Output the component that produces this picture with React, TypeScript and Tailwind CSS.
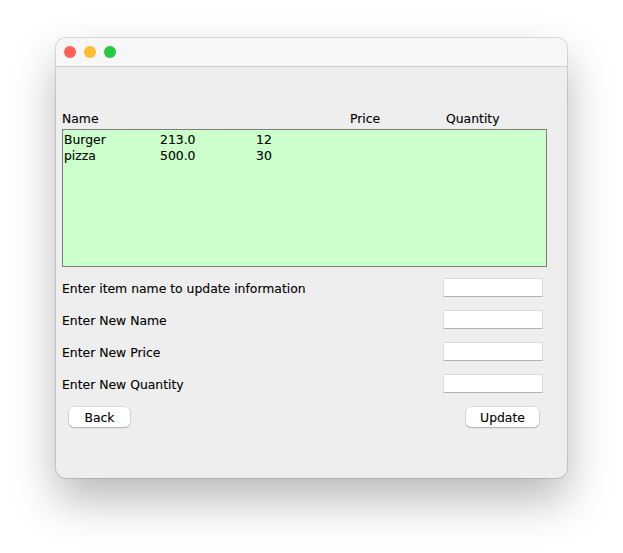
import React from "react"

const items = [
  { name: "Burger", price: "213.0", qty: "12" },
  { name: "pizza", price: "500.0", qty: "30" },
]

const fields = [
  "Enter item name to update information",
  "Enter New Name",
  "Enter New Price",
  "Enter New Quantity",
]

export default function App() {
  return (
    <div
      className="w-[623px] h-[553px] bg-white pl-[56px] pt-[38px] text-[12.4px] text-black [-webkit-text-stroke:0.12px_#000]"
      style={{ fontFamily: '"DejaVu Sans", "Liberation Sans", sans-serif' }}
    >
      <div className="w-[511px] h-[440px] rounded-[10px] bg-[#eeeeee] overflow-hidden flex flex-col shadow-[0_22px_45px_rgba(0,0,0,0.28),0_0_0_1px_rgba(0,0,0,0.12)]">
        {/* title bar */}
        <div className="h-[29px] shrink-0 bg-[#f7f7f7] border-b border-[#cfcfcf] flex items-center gap-[8px] pl-[8px]">
          <span className="w-[12px] h-[12px] rounded-full bg-[#ff5f57]" />
          <span className="w-[12px] h-[12px] rounded-full bg-[#febc2e]" />
          <span className="w-[12px] h-[12px] rounded-full bg-[#28c840]" />
        </div>

        <div className="px-[6px] pt-[43px]">
          {/* header */}
          <div className="grid grid-cols-[96px_96px_96px_96px_96px] leading-[16px] h-[19px] pt-[1px]">
            <span>Name</span>
            <span />
            <span />
            <span>Price</span>
            <span>Quantity</span>
          </div>

          {/* table */}
          <div className="w-[485px] h-[138px] border border-[#7d7d7d] bg-[#ccffcc] pl-[1px] pt-[2px]">
            {items.map(it => (
              <div key={it.name} className="grid grid-cols-[96px_96px_96px] leading-[16px]">
                <span>{it.name}</span>
                <span>{it.price}</span>
                <span>{it.qty}</span>
              </div>
            ))}
          </div>

          {/* form */}
          <div className="flex flex-col gap-[13px] pt-[11px] w-[481px]">
            {fields.map(f => (
              <div key={f} className="flex items-center justify-between h-[19px]">
                <span className="pt-[4px]">{f}</span>
                <div className="w-[100px] h-[19px] bg-white border border-[#dcdcdc] border-b-[#b4b4b4]" />
              </div>
            ))}
          </div>

          <div className="flex justify-between pl-[7px] pr-[4px] pt-[14px] w-[481px]">
            <button className="w-[61px] h-[20px] rounded-[5px] bg-white text-[12.4px] leading-[21px] shadow-[0_0_0_0.5px_rgba(0,0,0,0.15),0_1px_1.5px_rgba(0,0,0,0.2)]">
              Back
            </button>
            <button className="w-[73px] h-[20px] rounded-[5px] bg-white text-[12.4px] leading-[21px] shadow-[0_0_0_0.5px_rgba(0,0,0,0.15),0_1px_1.5px_rgba(0,0,0,0.2)]">
              Update
            </button>
          </div>
        </div>
      </div>
    </div>
  )
}
